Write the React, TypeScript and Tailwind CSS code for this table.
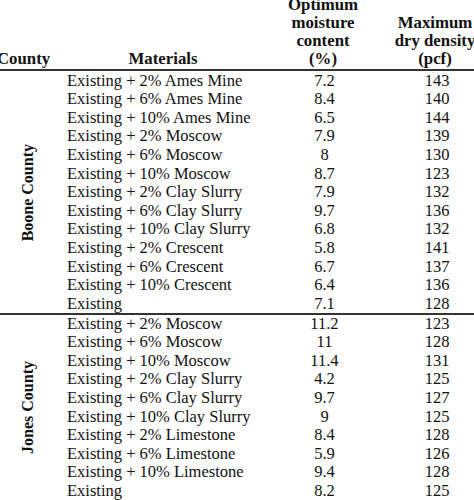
import React from "react";

const boone: [string, string, string][] = [
  ["Existing + 2% Ames Mine", "7.2", "143"],
  ["Existing + 6% Ames Mine", "8.4", "140"],
  ["Existing + 10% Ames Mine", "6.5", "144"],
  ["Existing + 2% Moscow", "7.9", "139"],
  ["Existing + 6% Moscow", "8", "130"],
  ["Existing + 10% Moscow", "8.7", "123"],
  ["Existing + 2% Clay Slurry", "7.9", "132"],
  ["Existing + 6% Clay Slurry", "9.7", "136"],
  ["Existing + 10% Clay Slurry", "6.8", "132"],
  ["Existing + 2% Crescent", "5.8", "141"],
  ["Existing + 6% Crescent", "6.7", "137"],
  ["Existing + 10% Crescent", "6.4", "136"],
  ["Existing", "7.1", "128"],
];

const jones: [string, string, string][] = [
  ["Existing + 2% Moscow", "11.2", "123"],
  ["Existing + 6% Moscow", "11", "128"],
  ["Existing + 10% Moscow", "11.4", "131"],
  ["Existing + 2% Clay Slurry", "4.2", "125"],
  ["Existing + 6% Clay Slurry", "9.7", "127"],
  ["Existing + 10% Clay Slurry", "9", "125"],
  ["Existing + 2% Limestone", "8.4", "128"],
  ["Existing + 6% Limestone", "5.9", "126"],
  ["Existing + 10% Limestone", "9.4", "128"],
  ["Existing", "8.2", "125"],
];

function Section({ name, rows }: { name: string; rows: [string, string, string][] }) {
  return (
    <div className="grid grid-cols-[62px_426px]">
      <div className="flex items-center justify-center">
        <span className="font-bold text-[16px] whitespace-nowrap [writing-mode:vertical-rl] rotate-180 pl-[6px]">{name}</span>
      </div>
      <div className="flex flex-col">
        {rows.map((r, i) => (
          <div key={i} className="grid grid-cols-[202px_118px_106px] h-[18.6px] leading-[18.6px]">
            <div className="pl-[5px] whitespace-nowrap">{r[0]}</div>
            <div className="text-center pl-[3px]">{r[1]}</div>
            <div className="text-center pl-[4px]">{r[2]}</div>
          </div>
        ))}
      </div>
    </div>
  );
}

export default function App() {
  return (
    <div className="w-[474px] h-[500px] overflow-hidden bg-white text-[#111] text-[16.5px] font-['Liberation_Serif','Times_New_Roman',serif]">
      <div className="w-[488px] mt-[-4.3px]">
        <div className="grid grid-cols-[62px_202px_118px_106px] items-end font-bold text-[16.8px] leading-[18px] pb-[1.5px]">
          <div className="text-left ml-[-3px]">County</div>
          <div className="text-center">Materials</div>
          <div className="text-center">
            Optimum
            <br />
            moisture
            <br />
            content
            <br />
            (%)
          </div>
          <div className="text-center">
            Maximum
            <br />
            dry density
            <br />
            (pcf)
          </div>
        </div>
        <div className="h-[1.5px] bg-[#333] mb-[1px]" />
        <Section name="Boone County" rows={boone} />
        <div className="h-[1.2px] bg-[#333]" />
        <Section name="Jones County" rows={jones} />
      </div>
    </div>
  );
}
